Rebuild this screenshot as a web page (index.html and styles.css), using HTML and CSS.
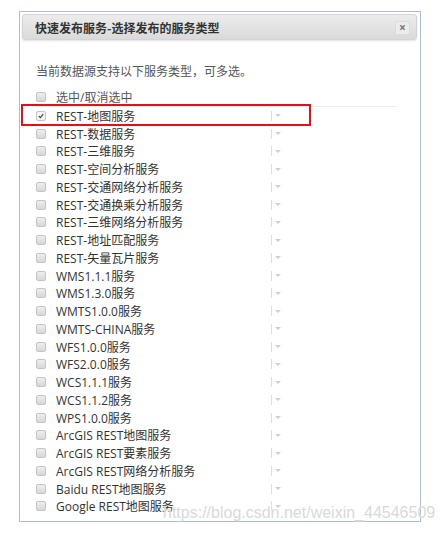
FILE: index.html
```html
<!DOCTYPE html>
<html>
<head>
<meta charset="utf-8">
<link rel="stylesheet" href="styles.css">
</head>
<body>
<div class="page">
  <div class="dialog">
    <div class="header">
      <span class="title">快速发布服务-选择发布的服务类型</span>
      <span class="close">×</span>
    </div>
    <div class="content">
      <p class="desc">当前数据源支持以下服务类型，可多选。</p>
      <div class="row all"><span class="cb"></span><span class="label">选中/取消选中</span></div>
      <ul class="list">
        <li class="row selected"><span class="cb checked"><svg viewBox="0 0 9 9" width="9" height="9"><path d="M2 4.6 L3.8 6.4 L7 2.4" fill="none" stroke="#444" stroke-width="1.4"/></svg></span><span class="label">REST-地图服务</span><span class="dd"><i class="bar"></i><i class="tri"></i></span><span class="hl"></span></li>
        <li class="row"><span class="cb"></span><span class="label">REST-数据服务</span><span class="dd"><i class="bar"></i><i class="tri"></i></span></li>
        <li class="row"><span class="cb"></span><span class="label">REST-三维服务</span><span class="dd"><i class="bar"></i><i class="tri"></i></span></li>
        <li class="row"><span class="cb"></span><span class="label">REST-空间分析服务</span><span class="dd"><i class="bar"></i><i class="tri"></i></span></li>
        <li class="row"><span class="cb"></span><span class="label">REST-交通网络分析服务</span><span class="dd"><i class="bar"></i><i class="tri"></i></span></li>
        <li class="row"><span class="cb"></span><span class="label">REST-交通换乘分析服务</span><span class="dd"><i class="bar"></i><i class="tri"></i></span></li>
        <li class="row"><span class="cb"></span><span class="label">REST-三维网络分析服务</span><span class="dd"><i class="bar"></i><i class="tri"></i></span></li>
        <li class="row"><span class="cb"></span><span class="label">REST-地址匹配服务</span><span class="dd"><i class="bar"></i><i class="tri"></i></span></li>
        <li class="row"><span class="cb"></span><span class="label">REST-矢量瓦片服务</span><span class="dd"><i class="bar"></i><i class="tri"></i></span></li>
        <li class="row"><span class="cb"></span><span class="label">WMS1.1.1服务</span><span class="dd"><i class="bar"></i><i class="tri"></i></span></li>
        <li class="row"><span class="cb"></span><span class="label">WMS1.3.0服务</span><span class="dd"><i class="bar"></i><i class="tri"></i></span></li>
        <li class="row"><span class="cb"></span><span class="label">WMTS1.0.0服务</span><span class="dd"><i class="bar"></i><i class="tri"></i></span></li>
        <li class="row"><span class="cb"></span><span class="label">WMTS-CHINA服务</span><span class="dd"><i class="bar"></i><i class="tri"></i></span></li>
        <li class="row"><span class="cb"></span><span class="label">WFS1.0.0服务</span><span class="dd"><i class="bar"></i><i class="tri"></i></span></li>
        <li class="row"><span class="cb"></span><span class="label">WFS2.0.0服务</span><span class="dd"><i class="bar"></i><i class="tri"></i></span></li>
        <li class="row"><span class="cb"></span><span class="label">WCS1.1.1服务</span><span class="dd"><i class="bar"></i><i class="tri"></i></span></li>
        <li class="row"><span class="cb"></span><span class="label">WCS1.1.2服务</span><span class="dd"><i class="bar"></i><i class="tri"></i></span></li>
        <li class="row"><span class="cb"></span><span class="label">WPS1.0.0服务</span><span class="dd"><i class="bar"></i><i class="tri"></i></span></li>
        <li class="row"><span class="cb"></span><span class="label">ArcGIS REST地图服务</span><span class="dd"><i class="bar"></i><i class="tri"></i></span></li>
        <li class="row"><span class="cb"></span><span class="label">ArcGIS REST要素服务</span><span class="dd"><i class="bar"></i><i class="tri"></i></span></li>
        <li class="row"><span class="cb"></span><span class="label">ArcGIS REST网络分析服务</span><span class="dd"><i class="bar"></i><i class="tri"></i></span></li>
        <li class="row"><span class="cb"></span><span class="label">Baidu REST地图服务</span><span class="dd"><i class="bar"></i><i class="tri"></i></span></li>
        <li class="row"><span class="cb"></span><span class="label">Google REST地图服务</span><span class="dd"><i class="bar"></i><i class="tri"></i></span></li>
      </ul>
    </div>
  </div>
  <div class="watermark">https://blog.csdn.net/weixin_44546509</div>
</div>
</body>
</html>
```
FILE: styles.css
```css
html, body {
  margin: 0;
  padding: 0;
  background: #fff;
}
body {
  width: 443px;
  height: 533px;
  overflow: hidden;
  font-family: "Open Sans", "Noto Sans CJK SC", sans-serif;
  font-size: 12px;
  color: #333;
}
.page {
  position: relative;
  width: 443px;
  height: 533px;
  padding: 11px 0 0 19px;
  box-sizing: border-box;
}
.dialog {
  width: 402px;
  height: 511px;
  box-sizing: border-box;
  border: 1px solid #a9bdd9;
  padding: 2px 3px 0 2px;
  overflow: hidden;
  background: #fff;
}
.header {
  height: 26px;
  box-sizing: border-box;
  display: flex;
  align-items: center;
  justify-content: space-between;
  padding: 0 6px 0 12px;
  background: linear-gradient(#ececec, #dadada);
  border: 1px solid #d4d4d4;
  border-radius: 3px;
  box-shadow: 0 1px 2px rgba(0,0,0,0.12);
}
.title {
  font-weight: bold;
  font-size: 12px;
  color: #333;
  font-family: "Noto Sans CJK SC", sans-serif;
}
.close {
  width: 13px;
  height: 12px;
  line-height: 11px;
  text-align: center;
  font-size: 12px;
  font-weight: bold;
  color: #777;
  background: #ececec;
  border: 1px solid #dcdcdc;
  border-radius: 2px;
  margin-top: 1px;
}
.content {
  padding: 0 0 0 14px;
}
.desc {
  margin: 22px 0 0 0;
  line-height: 17px;
  color: #555;
  font-family: "Noto Sans CJK SC", sans-serif;
}
.list {
  list-style: none;
  margin: 0;
  padding: 0;
}
.row {
  position: relative;
  display: flex;
  align-items: center;
  height: 17.75px;
}
.row.all {
  margin-top: 8px;
  height: 19px;
  border-bottom: 1px solid #eee;
  margin-right: 20px;
}
.cb {
  width: 8px;
  height: 8px;
  border: 1px solid #c4c4c4;
  border-radius: 2px;
  background: linear-gradient(#eeeeee, #d8d8d8);
  flex: none;
  display: flex;
}
.cb.checked {
  background: #f4f4f4;
}
.cb svg {
  width: 8px;
  height: 8px;
}
.label {
  margin-left: 10px;
  width: 215px;
  color: #333;
  white-space: nowrap;
}
.row.all .label {
  color: #555;
}
.dd {
  display: flex;
  align-items: center;
  gap: 3px;
}
.bar {
  width: 1px;
  height: 10px;
  background: #dedede;
}
.tri {
  width: 0;
  height: 0;
  border-left: 3px solid transparent;
  border-right: 3px solid transparent;
  border-top: 3px solid #cfcfcf;
}
.hl {
  position: absolute;
  left: -15px;
  top: -3.5px;
  width: 290px;
  height: 22px;
  box-sizing: border-box;
  border: 2px solid #e3101a;
}
.watermark {
  position: absolute;
  left: 163px;
  top: 504px;
  font-family: "Liberation Sans", sans-serif;
  font-size: 16px;
  color: rgba(212,212,212,0.9);
  text-shadow: 0 0 1px #fff;
  white-space: nowrap;
}
```
